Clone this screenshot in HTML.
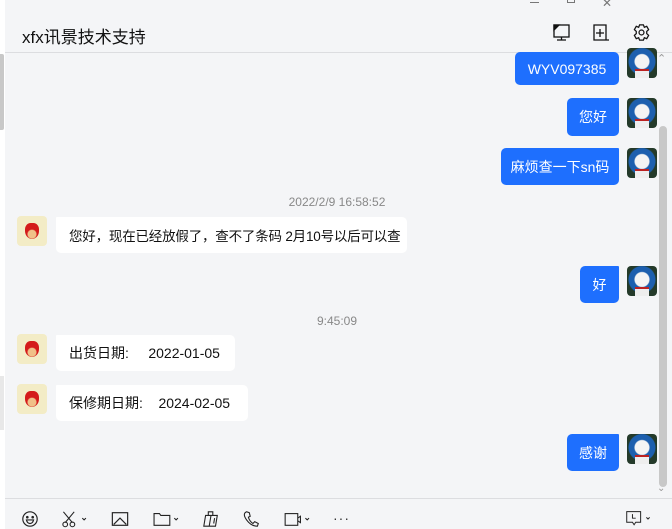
<!DOCTYPE html>
<html><head><meta charset="utf-8"><style>
*{margin:0;padding:0;box-sizing:border-box}
body{width:672px;height:529px;overflow:hidden;background:#f4f5f7;font-family:"Liberation Sans","Noto Sans CJK SC",sans-serif;position:relative}
.a{position:absolute}
.strip{left:0;top:0;width:5px;height:529px;background:#fff}
.hdr{left:5px;top:0;width:667px;height:53px;border-bottom:1px solid #dcdde0;background:#f4f5f7}
.title{left:22px;top:23px;font-size:17px;color:#111}
.b{position:absolute;background:#1e6ffe;color:#fff;font-size:14px;border-radius:5px;border-top-right-radius:1px;display:flex;align-items:center;justify-content:center}
.w{position:absolute;background:#fff;color:#111;font-size:14px;border-radius:5px;border-top-left-radius:1px;display:flex;align-items:center;padding-left:13px;white-space:pre}
.av{position:absolute;width:30px;height:30px;border-radius:4px;overflow:hidden}
.dora{background:radial-gradient(circle at 50% 45%,#f4f4f4 0 7px,#1d5fae 8px 13px,#243a2a 14px)}
.dora::after{content:"";position:absolute;left:8px;bottom:0;width:14px;height:7px;background:#eee;border-top:2px solid #b22}
.fox{background:#f3ecc6}
.fox::after{content:"";position:absolute;left:8px;top:7px;width:14px;height:16px;background:radial-gradient(circle at 50% 70%,#f0c088 0 4px,#d41b1b 5px);border-radius:40% 40% 50% 50%}
.t{font-size:12px;color:#888;text-align:center}
.ic{position:absolute;top:510px;height:18px}
</style></head><body>
<div class="a strip"></div>
<div class="a" style="left:0;top:54px;width:4px;height:76px;background:#c8c8c8;border-radius:0 2px 2px 0"></div>
<div class="a" style="left:0;top:376px;width:4px;height:54px;background:#e8e8e8"></div>
<div class="a hdr"></div>
<div class="a title">xfx讯景技术支持</div>
<div class="a" style="left:450px;top:-4px;font-size:12px;color:#666;letter-spacing:0">
<span class="a" style="left:80px;top:6px;width:9px;height:1px;background:#777"></span>
<span class="a" style="left:117px;top:0;width:8px;height:7px;border:1px solid #777"></span>
<span class="a" style="left:152px;top:0;color:#777">✕</span></div>
<svg class="a" style="left:552px;top:24px" width="20" height="18" viewBox="0 0 20 18" fill="none" stroke="#111" stroke-width="1.3"><rect x="2" y="1" width="15" height="12"/><path d="M2 1h5l-5 5z" fill="#111"/><path d="M5 16h9M9.5 13v3"/></svg>
<svg class="a" style="left:592px;top:24px" width="18" height="18" viewBox="0 0 18 18" fill="none" stroke="#111" stroke-width="1.3"><path d="M2 1h12v15H2z M14 16h3"/><path d="M8 5v8M4 9h8"/></svg>
<svg class="a" style="left:632px;top:23px" width="19" height="19" viewBox="0 0 20 20" fill="none" stroke="#111" stroke-width="1.3"><path d="M8 2h4l1 2.5 2.5-1 2 3.5-2 1.8v2.4l2 1.8-2 3.5-2.5-1L12 18H8l-1-2.5-2.5 1-2-3.5 2-1.8V8.8l-2-1.8 2-3.5 2.5 1z"/><circle cx="10" cy="10" r="2.6"/></svg>

<div class="a" style="left:659px;top:126px;width:8px;height:361px;background:#c8c8c8;border-radius:4px"></div>
<div class="a" style="left:657px;top:52px;font-size:11px;color:#999">⌃</div>
<div class="a" style="left:657px;top:483px;font-size:10px;color:#999">⌄</div>

<div class="b" style="left:515px;top:52px;width:104px;height:33px;border-top-right-radius:5px">WYV097385</div>
<div class="av dora" style="left:627px;top:48px"></div>
<div class="b" style="left:567px;top:98px;width:52px;height:38px">您好</div>
<div class="av dora" style="left:627px;top:98px"></div>
<div class="b" style="left:501px;top:148px;width:118px;height:37px">麻烦查一下sn码</div>
<div class="av dora" style="left:627px;top:148px"></div>
<div class="a t" style="left:237px;top:195px;width:200px">2022/2/9 16:58:52</div>
<div class="av fox" style="left:17px;top:216px"></div>
<div class="w" style="left:56px;top:217px;width:351px;height:36px;font-size:13.5px;letter-spacing:-0.2px">您好，现在已经放假了，查不了条码 2月10号以后可以查</div>
<div class="b" style="left:580px;top:266px;width:39px;height:37px">好</div>
<div class="av dora" style="left:627px;top:266px"></div>
<div class="a t" style="left:237px;top:314px;width:200px">9:45:09</div>
<div class="av fox" style="left:17px;top:334px"></div>
<div class="w" style="left:56px;top:335px;width:179px;height:36px">出货日期:     2022-01-05</div>
<div class="av fox" style="left:17px;top:384px"></div>
<div class="w" style="left:56px;top:385px;width:192px;height:36px">保修期日期:    2024-02-05</div>
<div class="b" style="left:567px;top:434px;width:52px;height:37px">感谢</div>
<div class="av dora" style="left:627px;top:434px"></div>

<div class="a" style="left:5px;top:498px;width:667px;height:1px;background:#dcdde0"></div>
<svg class="ic" style="left:20px" width="20" height="20" viewBox="0 0 20 20" fill="none" stroke="#222" stroke-width="1.3"><circle cx="10" cy="10" r="8"/><circle cx="7" cy="8" r=".8" fill="#222"/><circle cx="13" cy="8" r=".8" fill="#222"/><path d="M6 11h8q-1 4-4 4t-4-4z"/></svg>
<svg class="ic" style="left:59px" width="34" height="20" viewBox="0 0 34 20" fill="none" stroke="#222" stroke-width="1.2"><path d="M3 2l10 12M15 2L5 14"/><circle cx="5" cy="16" r="2.6"/><circle cx="13" cy="16" r="2.6"/><path d="M24 9l2 2 2-2"/></svg>
<svg class="ic" style="left:110px" width="20" height="20" viewBox="0 0 20 20" fill="none" stroke="#222" stroke-width="1.3"><rect x="1.5" y="3" width="17" height="14"/><path d="M3 16l7-7 7 7"/></svg>
<svg class="ic" style="left:151px" width="34" height="20" viewBox="0 0 34 20" fill="none" stroke="#222" stroke-width="1.2"><path d="M1.5 4h6l1.5 2h10v11h-17.5z"/><path d="M24 9l2 2 2-2"/></svg>
<svg class="ic" style="left:201px" width="20" height="20" viewBox="0 0 20 20" fill="none" stroke="#222" stroke-width="1.2"><path d="M4 6h13l-2 12H2z M7 6V2h5v4 M10 6l-2 12 M14 9l-1 6"/></svg>
<svg class="ic" style="left:242px" width="20" height="20" viewBox="0 0 20 20" fill="none" stroke="#222" stroke-width="1.2"><path d="M4 2l3 1 1 4-2 1q1 4 5 7l2-2 4 2-1 3q-7 0-12-7T4 2z"/></svg>
<svg class="ic" style="left:282px" width="36" height="20" viewBox="0 0 36 20" fill="none" stroke="#222" stroke-width="1.2"><rect x="1.5" y="4" width="14" height="13"/><path d="M15.5 9l3-2v7l-3-2"/><path d="M24 9l2 2 2-2"/></svg>
<div class="a" style="left:333px;top:510px;font-size:14px;color:#333;letter-spacing:1px">···</div>
<svg class="ic" style="left:622px" width="34" height="22" viewBox="0 0 34 22" fill="none" stroke="#222" stroke-width="1.2"><path d="M2 2h17v13h-6l-2 3-2-3H2z"/><path d="M9 5v5h4"/><path d="M26 9l2 2 2-2"/></svg>
</body></html>
